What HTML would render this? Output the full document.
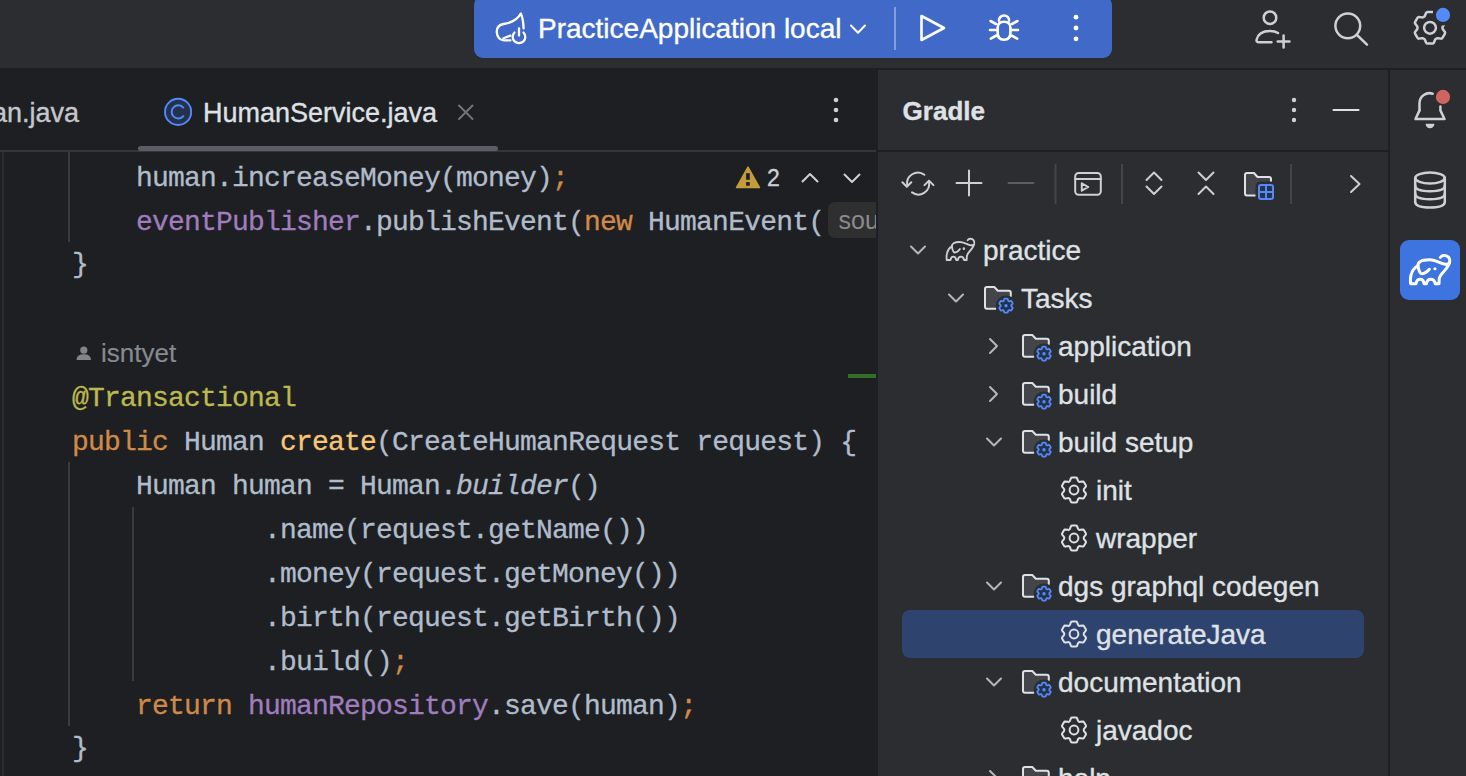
<!DOCTYPE html>
<html><head><meta charset="utf-8"><style>
html,body{margin:0;padding:0;}
body{width:1466px;height:776px;overflow:hidden;position:relative;background:#1E1F22;font-family:"Liberation Sans", sans-serif;}
.t{position:absolute;white-space:pre;font-family:"Liberation Sans", sans-serif;-webkit-text-stroke:0.35px currentColor;}
.c{position:absolute;white-space:pre;font-family:"Liberation Mono", monospace;font-size:28px;line-height:44px;letter-spacing:-0.8px;color:#B0BCCB;-webkit-text-stroke:0.3px currentColor;}
.c .i{font-style:italic;}
.b{position:absolute;}
</style></head><body>
<!-- main toolbar -->
<div class="b" style="left:0;top:0;width:1466px;height:68px;background:#2B2D30"></div>
<div class="b" style="left:474px;top:-4px;width:638px;height:62px;border-radius:9px;background:#416AC8"></div>
<div class="b" style="left:894px;top:7px;width:2px;height:43px;background:rgba(255,255,255,0.35)"></div>
<!-- tab bar -->
<div class="b" style="left:0;top:150px;width:876px;height:2px;background:#34363A"></div>
<div class="b" style="left:138px;top:146px;width:360px;height:5px;border-radius:3px;background:#5A5D63"></div>
<!-- editor guides -->
<div class="b" style="left:2px;top:152px;width:2px;height:624px;background:#2C2D31"></div>
<div class="b" style="left:68px;top:152px;width:2px;height:90px;background:#393B40"></div>
<div class="b" style="left:68px;top:462px;width:2px;height:264px;background:#393B40"></div>
<div class="b" style="left:132px;top:507px;width:2px;height:174px;background:#393B40"></div>
<div class="b" style="left:848px;top:374px;width:28px;height:4px;background:#336E24"></div>
<div class="b" style="left:828px;top:202px;width:48px;height:36px;border-radius:7px 0 0 7px;background:#2F2F30"></div>
<!-- gradle panel -->
<div class="b" style="left:878px;top:70px;width:510px;height:706px;background:#2B2D30"></div>
<div class="b" style="left:878px;top:150px;width:510px;height:2px;background:#1E1F22"></div>
<div class="b" style="left:902px;top:610px;width:462px;height:48px;border-radius:8px;background:#2E436E"></div>
<!-- right stripe -->
<div class="b" style="left:1390px;top:70px;width:76px;height:706px;background:#2B2D30"></div>
<div class="b" style="left:1400px;top:240px;width:60px;height:60px;border-radius:9px;background:#3D74E0"></div>
<div class="c" style="left:136px;top:157.04px"><span style="color:#B0BCCB">human.increaseMoney(money)</span><span style="color:#D08A48">;</span></div>
<div class="c" style="left:136px;top:201.04px"><span style="color:#A07DBE">eventPublisher</span><span style="color:#B0BCCB">.publishEvent(</span><span style="color:#D08A48">new</span><span style="color:#B0BCCB"> HumanEvent(</span></div>
<div class="c" style="left:72px;top:243.04px"><span style="color:#B0BCCB">}</span></div>
<div class="c" style="left:72px;top:377.05px"><span style="color:#BDB84F">@Transactional</span></div>
<div class="c" style="left:72px;top:421.05px"><span style="color:#D08A48">public</span><span style="color:#B0BCCB"> Human </span><span style="color:#F8C677">create</span><span style="color:#B0BCCB">(CreateHumanRequest request) {</span></div>
<div class="c" style="left:136px;top:465.05px"><span style="color:#B0BCCB">Human human = Human.</span><span style="color:#B0BCCB" class=i>builder</span><span style="color:#B0BCCB">()</span></div>
<div class="c" style="left:264px;top:509.05px"><span style="color:#B0BCCB">.name(request.getName())</span></div>
<div class="c" style="left:264px;top:553.04px"><span style="color:#B0BCCB">.money(request.getMoney())</span></div>
<div class="c" style="left:264px;top:597.04px"><span style="color:#B0BCCB">.birth(request.getBirth())</span></div>
<div class="c" style="left:264px;top:641.04px"><span style="color:#B0BCCB">.build()</span><span style="color:#D08A48">;</span></div>
<div class="c" style="left:136px;top:685.04px"><span style="color:#D08A48">return</span><span style="color:#B0BCCB"> </span><span style="color:#A07DBE">humanRepository</span><span style="color:#B0BCCB">.save(human)</span><span style="color:#D08A48">;</span></div>
<div class="c" style="left:72px;top:727.04px"><span style="color:#B0BCCB">}</span></div>
<div class="t" style="left:538px;top:8.50px;font-size:28px;line-height:40px;color:#FFFFFF;font-weight:normal;letter-spacing:0px;">PracticeApplication local</div>
<div class="t" style="left:203px;top:92.64px;font-size:27px;line-height:40px;color:#DFE1E5;font-weight:normal;letter-spacing:0px;">HumanService.java</div>
<div class="t" style="left:-8px;top:92.64px;font-size:27px;line-height:40px;color:#C4C7CC;font-weight:normal;letter-spacing:0px;">an.java</div>
<div class="t" style="left:902.6px;top:91.09px;font-size:26px;line-height:40px;color:#DFE1E5;font-weight:bold;letter-spacing:0px;">Gradle</div>
<div class="t" style="left:101px;top:332.99px;font-size:26px;line-height:40px;color:#868A91;font-weight:normal;letter-spacing:0px;-webkit-text-stroke:0.15px currentColor;">isntyet</div>
<div class="t" style="left:767px;top:158.03px;font-size:23px;line-height:40px;color:#CED0D6;font-weight:normal;letter-spacing:0px;">2</div>
<div class="t" style="left:838.5px;top:200.34px;font-size:25px;line-height:40px;color:#8B8B8C;font-weight:normal;letter-spacing:0px;-webkit-text-stroke:0;width:37.5px;overflow:hidden;">sou</div>
<div class="t" style="left:983px;top:230.80px;font-size:28px;line-height:40px;color:#DFE1E5;font-weight:normal;letter-spacing:0px;">practice</div>
<div class="t" style="left:1021px;top:278.80px;font-size:28px;line-height:40px;color:#DFE1E5;font-weight:normal;letter-spacing:0px;">Tasks</div>
<div class="t" style="left:1058px;top:326.80px;font-size:28px;line-height:40px;color:#DFE1E5;font-weight:normal;letter-spacing:0px;">application</div>
<div class="t" style="left:1058px;top:374.80px;font-size:28px;line-height:40px;color:#DFE1E5;font-weight:normal;letter-spacing:0px;">build</div>
<div class="t" style="left:1058px;top:422.80px;font-size:28px;line-height:40px;color:#DFE1E5;font-weight:normal;letter-spacing:0px;">build setup</div>
<div class="t" style="left:1096px;top:470.80px;font-size:28px;line-height:40px;color:#DFE1E5;font-weight:normal;letter-spacing:0px;">init</div>
<div class="t" style="left:1096px;top:518.80px;font-size:28px;line-height:40px;color:#DFE1E5;font-weight:normal;letter-spacing:0px;">wrapper</div>
<div class="t" style="left:1058px;top:566.80px;font-size:28px;line-height:40px;color:#DFE1E5;font-weight:normal;letter-spacing:0px;">dgs graphql codegen</div>
<div class="t" style="left:1096px;top:614.80px;font-size:28px;line-height:40px;color:#DFE1E5;font-weight:normal;letter-spacing:0px;">generateJava</div>
<div class="t" style="left:1058px;top:662.80px;font-size:28px;line-height:40px;color:#DFE1E5;font-weight:normal;letter-spacing:0px;">documentation</div>
<div class="t" style="left:1096px;top:710.80px;font-size:28px;line-height:40px;color:#DFE1E5;font-weight:normal;letter-spacing:0px;">javadoc</div>
<div class="t" style="left:1058px;top:758.80px;font-size:28px;line-height:40px;color:#DFE1E5;font-weight:normal;letter-spacing:0px;">help</div>
<svg class="b" style="left:0;top:0" width="1466" height="776" viewBox="0 0 1466 776" fill="none" stroke-linecap="round" stroke-linejoin="round">
<defs>
<path id="eleph" d="M24.3 3.8 C25.5 2 28.5 1.8 30.5 3.5 C32 5 31.6 8 30.6 9.6 C29.6 11.4 28.5 13 27 14.5 C25 16.5 23.6 18 23.4 20.5 L23.3 23.8 H20.4 C20 21.6 18.8 20.4 17 20.4 C15.2 20.4 14 21.6 13.7 23.8 H11.9 C11.6 21.6 10.6 20.4 8.9 20.4 C7.2 20.4 6.1 21.6 5.7 23.8 H1.6 C1.4 21.5 1.4 19 2 17 C2.8 14 4.5 11.6 7.2 10.1 C7 7.5 9.5 5.5 15.9 5.5 C19 5.5 22 6.8 24.5 8 C26.5 9 28.8 9.3 30.6 8.4"/>
<path id="ear" d="M7.2 10.1 C7.6 12.5 8 14.6 9.2 15.7 C10.6 16.9 13.5 15.6 15.9 12.8"/>
<g id="fold"><path d="M18.5 28.7 H10 Q8 28.7 8 26.7 V9 Q8 7 10 7 H17.3 L20.8 10.8 H31.8 Q33.8 10.8 33.8 12.8 V16" stroke="#DFE1E5" stroke-width="2" fill="#43454A"/><circle cx="29" cy="25.7" r="10.3" fill="#2B2D30"/><path d="M31.13 20.50 L30.73 19.08 Q30.62 18.68 30.04 18.68 L27.96 18.68 Q27.38 18.68 27.27 19.08 L26.87 20.50 Q26.76 20.90 26.62 20.98 L26.10 21.28 Q25.96 21.36 25.56 21.26 L24.13 20.89 Q23.73 20.79 23.44 21.29 L22.41 23.09 Q22.11 23.59 22.40 23.89 L23.43 24.94 Q23.72 25.24 23.72 25.40 L23.72 26.00 Q23.72 26.16 23.43 26.46 L22.40 27.51 Q22.11 27.81 22.41 28.31 L23.44 30.11 Q23.73 30.61 24.13 30.51 L25.56 30.14 Q25.96 30.04 26.10 30.12 L26.62 30.42 Q26.76 30.50 26.87 30.90 L27.27 32.32 Q27.38 32.72 27.96 32.72 L30.04 32.72 Q30.62 32.72 30.73 32.32 L31.13 30.90 Q31.24 30.50 31.38 30.42 L31.90 30.12 Q32.04 30.04 32.44 30.14 L33.87 30.51 Q34.27 30.61 34.56 30.11 L35.59 28.31 Q35.89 27.81 35.60 27.51 L34.57 26.46 Q34.28 26.16 34.28 26.00 L34.28 25.40 Q34.28 25.24 34.57 24.94 L35.60 23.89 Q35.89 23.59 35.59 23.09 L34.56 21.29 Q34.27 20.79 33.87 20.89 L32.44 21.26 Q32.04 21.36 31.90 21.28 L31.38 20.98 Q31.24 20.90 31.13 20.50Z" stroke="#548AF7" stroke-width="1.8" fill="#25324D"/><circle cx="29" cy="25.7" r="1.7" fill="#548AF7"/></g>
<g id="tgear"><path d="M3.90 -9.55 L3.03 -11.93 Q2.79 -12.59 1.79 -12.59 L-1.79 -12.59 Q-2.79 -12.59 -3.03 -11.93 L-3.90 -9.55 Q-4.14 -8.88 -4.41 -8.73 L-5.35 -8.18 Q-5.62 -8.03 -6.32 -8.15 L-8.81 -8.59 Q-9.51 -8.72 -10.01 -7.84 L-11.80 -4.75 Q-12.30 -3.88 -11.85 -3.33 L-10.22 -1.40 Q-9.76 -0.85 -9.76 -0.55 L-9.76 0.55 Q-9.76 0.85 -10.22 1.40 L-11.85 3.33 Q-12.30 3.88 -11.80 4.75 L-10.01 7.84 Q-9.51 8.72 -8.81 8.59 L-6.32 8.15 Q-5.62 8.03 -5.35 8.18 L-4.41 8.73 Q-4.14 8.88 -3.90 9.55 L-3.03 11.93 Q-2.79 12.59 -1.79 12.59 L1.79 12.59 Q2.79 12.59 3.03 11.93 L3.90 9.55 Q4.14 8.88 4.41 8.73 L5.35 8.18 Q5.62 8.03 6.32 8.15 L8.81 8.59 Q9.51 8.72 10.01 7.84 L11.80 4.75 Q12.30 3.88 11.85 3.33 L10.22 1.40 Q9.76 0.85 9.76 0.55 L9.76 -0.55 Q9.76 -0.85 10.22 -1.40 L11.85 -3.33 Q12.30 -3.88 11.80 -4.75 L10.01 -7.84 Q9.51 -8.72 8.81 -8.59 L6.32 -8.15 Q5.62 -8.03 5.35 -8.18 L4.41 -8.73 Q4.14 -8.88 3.90 -9.55Z" stroke="#DFE1E5" stroke-width="2"/><circle cx="0" cy="0" r="4.4" stroke="#DFE1E5" stroke-width="2"/></g>
</defs>
<g stroke="#FFFFFF" stroke-width="2.3"><path d="M523.6 28.4 C523.4 22 522.4 17 520.8 13.5 C518 19 513 22.5 503.5 24 C498.5 25 496.5 28.5 496.8 32.5 C497.2 37 499.8 40 504 40.3 H510.5"/><path d="M503.5 38.3 L510.4 35.6"/><path d="M514.5 32.5 A6.3 6.3 0 1 0 523.5 32.5"/><path d="M519 28.5 V35.5"/><path d="M851 25.5 L858 32.8 L865 25.5" stroke-width="2"/><path d="M921.5 16 L944 28 L921.5 40 Z" stroke-width="2.6"/><path d="M998.9 20.6 A5.1 5.1 0 0 1 1009.1 20.6" stroke-width="2.6"/><path d="M997.7 27.5 Q997.7 21.7 1004 21.7 Q1010.4 21.7 1010.4 27.5 V33 Q1010.4 39.7 1004 39.7 Q997.7 39.7 997.7 33 Z" stroke-width="2.6"/><path d="M996 24 L990.5 21 M1012 24 L1017.5 21 M996.5 30 H990 M1011.5 30 H1018 M996.5 35.5 L990.8 38.6 M1011.5 35.5 L1017.2 38.6" stroke-width="2.6"/></g>
<g fill="#FFFFFF"><circle cx="1076" cy="17.2" r="2.4"/><circle cx="1076" cy="28" r="2.4"/><circle cx="1076" cy="38.8" r="2.4"/></g>
<g stroke="#CED0D6" stroke-width="2.5"><circle cx="1270" cy="17.7" r="6.3"/><path d="M1271.5 42.3 H1259 Q1256.2 42.3 1256.6 39.8 Q1258.5 31 1270 31 Q1275 31 1278 33"/><path d="M1283.6 35.6 V47.4 M1277.7 41.5 H1289.5"/><circle cx="1347.8" cy="25.8" r="12.4"/><path d="M1357 35 L1367 44.6"/><path d="M1435.00 15.59 L1433.83 12.78 Q1433.51 11.98 1432.24 11.98 L1427.76 11.98 Q1426.49 11.98 1426.17 12.78 L1425.00 15.59 Q1424.68 16.38 1424.33 16.58 L1423.12 17.28 Q1422.77 17.48 1421.92 17.37 L1418.91 16.97 Q1418.06 16.86 1417.42 17.95 L1415.18 21.84 Q1414.55 22.93 1415.07 23.61 L1416.93 26.02 Q1417.45 26.70 1417.45 27.10 L1417.45 28.50 Q1417.45 28.90 1416.93 29.58 L1415.07 31.99 Q1414.55 32.67 1415.18 33.76 L1417.42 37.65 Q1418.06 38.74 1418.91 38.63 L1421.92 38.23 Q1422.77 38.12 1423.12 38.32 L1424.33 39.02 Q1424.68 39.22 1425.00 40.01 L1426.17 42.82 Q1426.49 43.62 1427.76 43.62 L1432.24 43.62 Q1433.51 43.62 1433.83 42.82 L1435.00 40.01 Q1435.32 39.22 1435.67 39.02 L1436.88 38.32 Q1437.23 38.12 1438.08 38.23 L1441.09 38.63 Q1441.94 38.74 1442.58 37.65 L1444.82 33.76 Q1445.45 32.67 1444.93 31.99 L1443.07 29.58 Q1442.55 28.90 1442.55 28.50 L1442.55 27.10 Q1442.55 26.70 1443.07 26.02 L1444.93 23.61 Q1445.45 22.93 1444.82 21.84 L1442.58 17.95 Q1441.94 16.86 1441.09 16.97 L1438.08 17.37 Q1437.23 17.48 1436.88 17.28 L1435.67 16.58 Q1435.32 16.38 1435.00 15.59Z"/><circle cx="1430" cy="27.8" r="5.9"/></g>
<circle cx="1443" cy="14.9" r="10.5" fill="#2B2D30"/><circle cx="1443" cy="14.9" r="7.1" fill="#548AF7"/>
<circle cx="178.1" cy="111.9" r="13.1" stroke="#548AF7" stroke-width="1.9" fill="#25324D"/>
<path d="M183.3 107.6 A6.6 6.6 0 1 0 183.3 116.2" stroke="#548AF7" stroke-width="1.9"/>
<path d="M459 105.5 L472.5 119 M472.5 105.5 L459 119" stroke="#6F737A" stroke-width="2"/>
<g fill="#CED0D6"><circle cx="836" cy="100" r="2.3"/><circle cx="836" cy="110" r="2.3"/><circle cx="836" cy="120" r="2.3"/></g>
<path d="M748 167 L759.5 187.5 H736.5 Z" fill="#C49C3E" stroke="#C49C3E" stroke-width="1.5"/>
<rect x="746.1" y="173.2" width="3.7" height="6.6" fill="#1E1F22"/><rect x="746.1" y="182.1" width="3.7" height="3.6" fill="#1E1F22"/>
<path d="M802.5 181.5 L810 174 L817.5 181.5 M844.5 174.5 L852 182 L859.5 174.5" stroke="#CED0D6" stroke-width="2"/>
<circle cx="83.8" cy="350.2" r="3.6" fill="#80848B"/><path d="M76.5 360 Q76.5 354.2 83.8 354.2 Q91 354.2 91 360 Z" fill="#80848B"/>
<g fill="#CED0D6"><circle cx="1294" cy="100" r="2.2"/><circle cx="1294" cy="110" r="2.2"/><circle cx="1294" cy="120" r="2.2"/></g>
<path d="M1333.5 110 H1358.5" stroke="#DFE1E5" stroke-width="2.2"/>
<g stroke="#CED0D6" stroke-width="2"><path d="M907.3 185.5 A10.8 10.8 0 0 1 924.4 174.8"/><path d="M929 181.7 A10.8 10.8 0 0 1 912 192.4"/><path d="M902.4 182.3 L906.8 186.7 L911.3 182.3"/><path d="M924.5 185.1 L929 180.6 L933.5 185.1"/><path d="M969 170.5 V195.5 M956.5 183 H981.5"/><rect x="1075.2" y="173" width="25.6" height="21.7" rx="3.5"/><path d="M1075.2 179 H1100.8"/><path d="M1081.8 183.3 L1088.3 187 L1081.8 190.7 Z" stroke-width="2"/><path d="M1146.5 180 L1154 172.5 L1161.5 180 M1146.5 186.5 L1154 194 L1161.5 186.5"/><path d="M1198.5 172.5 L1206 180 L1213.5 172.5 M1198.5 194 L1206 186.5 L1213.5 194"/><path d="M1351 176 L1359.5 184 L1351 192"/></g>
<path d="M1008.5 183 H1033.5" stroke="#5A5D63" stroke-width="2"/>
<g fill="#43454A"><rect x="1054.5" y="164" width="2" height="40"/><rect x="1121" y="164" width="2" height="40"/><rect x="1290" y="164" width="2" height="40"/></g>
<path d="M1256 195.5 H1247 Q1245 195.5 1245 193.5 V175 Q1245 173 1247 173 H1254 L1257.5 177 H1269 Q1271 177 1271 179 V183" stroke="#DFE1E5" stroke-width="2" fill="#43454A"/>
<rect x="1255.5" y="181.5" width="21" height="21" rx="5" fill="#2B2D30"/>
<rect x="1259" y="185" width="14" height="14" rx="2" fill="#25324D" stroke="#548AF7" stroke-width="2"/><path d="M1266 185 V199 M1259 192 H1273" stroke="#548AF7" stroke-width="2"/>
<g stroke="#B4B7BC" stroke-width="2"><path d="M911 246.5 L918 253.5 L925 246.5"/><path d="M949 294.5 L956 301.5 L963 294.5"/><path d="M990 339 L997 346 L990 353"/><path d="M990 387 L997 394 L990 401"/><path d="M987 438.5 L994 445.5 L1001 438.5"/><path d="M987 582.5 L994 589.5 L1001 582.5"/><path d="M987 678.5 L994 685.5 L1001 678.5"/><path d="M990 771 L997 778 L990 785"/></g>
<g transform="translate(945.2 236.5) scale(0.923 0.986)"><use href="#eleph" stroke="#CED0D6" stroke-width="2"/><use href="#ear" stroke="#CED0D6" stroke-width="2"/><circle cx="20.2" cy="12.3" r="1.3" fill="#CED0D6"/></g>
<use href="#fold" x="977" y="280"/>
<use href="#fold" x="1015" y="328"/>
<use href="#fold" x="1015" y="376"/>
<use href="#fold" x="1015" y="424"/>
<use href="#fold" x="1015" y="568"/>
<use href="#fold" x="1015" y="664"/>
<use href="#fold" x="1015" y="760"/>
<use href="#tgear" x="1074" y="490"/>
<use href="#tgear" x="1074" y="538"/>
<use href="#tgear" x="1074" y="634"/>
<use href="#tgear" x="1074" y="730"/>
<g stroke="#CED0D6" stroke-width="2.5"><path d="M1419.5 110.4 V103 A10 10 0 0 1 1432.7 93.7"/><path d="M1419.5 110.4 L1415.5 119 H1444.5 L1440.4 110.4 V106.5"/><ellipse cx="1430" cy="178" rx="14.8" ry="5.4"/><path d="M1415.2 178 V202 Q1415.2 207.5 1430 207.5 Q1444.8 207.5 1444.8 202 V178"/><path d="M1415.2 185.5 Q1415.2 191.2 1430 191.2 Q1444.8 191.2 1444.8 185.5"/><path d="M1415.2 193.5 Q1415.2 199.2 1430 199.2 Q1444.8 199.2 1444.8 193.5"/></g>
<path d="M1425.6 123.8 H1434.4 A4.4 4.4 0 0 1 1425.6 123.8 Z" fill="#CED0D6"/>
<circle cx="1443" cy="96.9" r="7.1" fill="#CF6560"/>
<g transform="translate(1408.5 252.5) scale(1.31)"><use href="#eleph" stroke="#FFFFFF" stroke-width="2.3"/><use href="#ear" stroke="#FFFFFF" stroke-width="2.3"/><circle cx="20.2" cy="12.4" r="1.2" fill="#FFFFFF"/></g>
</svg>
</body></html>
